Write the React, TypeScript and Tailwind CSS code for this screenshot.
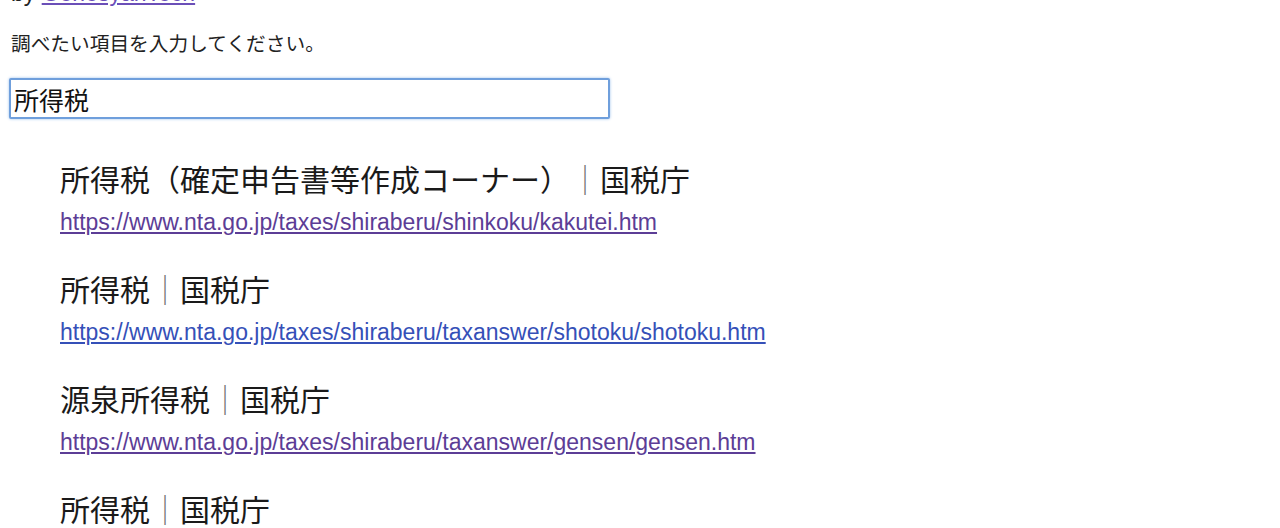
const Bar = () => <span className="text-[#777]">｜</span>;

const results = [
  {
    head: "所得税（確定申告書等作成コーナー）",
    url: "https://www.nta.go.jp/taxes/shiraberu/shinkoku/kakutei.htm",
    visited: true,
  },
  {
    head: "所得税",
    url: "https://www.nta.go.jp/taxes/shiraberu/taxanswer/shotoku/shotoku.htm",
    visited: false,
  },
  {
    head: "源泉所得税",
    url: "https://www.nta.go.jp/taxes/shiraberu/taxanswer/gensen/gensen.htm",
    visited: true,
  },
  {
    head: "所得税",
    url: "https://www.nta.go.jp/taxes/shiraberu/taxanswer/shotoku/shotoku.htm",
    visited: false,
  },
];

const jp = "font-['Liberation_Sans','Noto_Sans_CJK_JP',sans-serif]";

export default function App() {
  return (
    <div className={`h-[528px] w-[1280px] overflow-hidden bg-white text-[#222] ${jp}`}>
      <div className="flex flex-col pl-[11px]">
        <p className="-mt-[20px] h-[26px] text-[23px] leading-[26px]">
          by{" "}
          <a href="#" className="text-[#6b4fb8] underline">
            GenesyanTech
          </a>
        </p>

        <p className="mt-[27px] text-[19.7px] leading-[22px]">調べたい項目を入力してください。</p>

        <input
          type="text"
          readOnly
          defaultValue="所得税"
          className="-ml-[2px] mt-[23px] h-[41px] w-[601px] rounded-[2px] border-2 border-[#6f9fdc] bg-white px-[3px] text-[25px] text-[#111] shadow-[0_0_3px_#9cc0ec] outline-none"
        />
      </div>

      <ul className="mt-[44px] flex flex-col gap-[38px] pl-[60px]">
        {results.map((r, i) => (
          <li key={i} className="flex flex-col">
            <h3 className="text-[30px] leading-[36px] text-[#1a1a1a]">
              {r.head}
              <Bar />
              国税庁
            </h3>
            <a
              href="#"
              className={`mt-[10px] text-[23px] leading-[26px] underline ${
                r.visited ? "text-[#5c3d96]" : "text-[#3550b8]"
              }`}
            >
              {r.url}
            </a>
          </li>
        ))}
      </ul>
    </div>
  );
}
